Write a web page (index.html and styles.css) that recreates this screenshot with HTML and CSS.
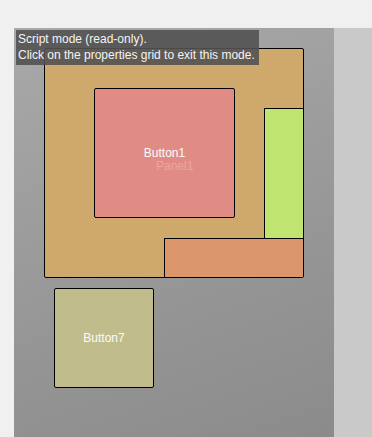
FILE: index.html
```html
<!DOCTYPE html>
<html>
<head>
<meta charset="utf-8">
<link rel="stylesheet" href="styles.css">
</head>
<body>
<div class="window">
  <div class="toolbar"></div>
  <div class="workarea">
    <div class="gutter"></div>
    <div class="canvas">
      <div class="ctl panel1">
        <div class="ctl button1"><span class="label">Button1</span></div>
        <span class="caption">Panel1</span>
        <div class="ctl green"></div>
        <div class="ctl peach"></div>
      </div>
      <div class="ctl button7"><span class="label">Button7</span></div>
      <div class="notice">Script mode (read-only).<br>Click on the properties grid to exit this mode.</div>
    </div>
    <div class="sidebar"></div>
  </div>
</div>
</body>
</html>
```
FILE: styles.css
```css
html, body {
  margin: 0;
  padding: 0;
  width: 372px;
  height: 437px;
  overflow: hidden;
  background: #f0f0f0;
}
.window {
  display: flex;
  flex-direction: column;
  height: 437px;
}
.toolbar {
  height: 28px;
  flex: none;
}
.workarea {
  flex: 1;
  display: flex;
}
.gutter {
  width: 14px;
  flex: none;
}
.canvas {
  width: 320px;
  flex: none;
  position: relative;
  background: linear-gradient(160deg, #a9a9a9 0%, #969696 60%, #8b8b8b 100%);
  overflow: hidden;
}
.sidebar {
  flex: 1;
  background: #c9c9c9;
}
.ctl {
  position: absolute;
  box-sizing: border-box;
  border: 1px solid #000;
  border-radius: 2px;
  display: flex;
  align-items: center;
  justify-content: center;
}
.panel1 {
  left: 30px;
  top: 20px;
  width: 260px;
  height: 230px;
  background: #cfa86b;
  overflow: hidden;
}
.button1 {
  left: 49px;
  top: 39px;
  width: 141px;
  height: 130px;
  background: #e08c85;
}
.green {
  left: 219px;
  top: 59px;
  width: 42px;
  height: 131px;
  background: #c0e470;
  border-radius: 0;
}
.peach {
  left: 119px;
  top: 189px;
  width: 142px;
  height: 41px;
  background: #dc966c;
  border-radius: 0;
}
.button7 {
  left: 40px;
  top: 260px;
  width: 100px;
  height: 100px;
  background: #c1bc8c;
}
.label {
  font-family: "Liberation Sans", Arial, sans-serif;
  font-size: 12px;
  color: #fafafa;
  line-height: 10px;
}
.button1 .label {
  margin-top: -1px;
}
.caption {
  position: absolute;
  left: 111px;
  top: 112px;
  font-family: "Liberation Sans", Arial, sans-serif;
  font-size: 12px;
  line-height: 10px;
  color: #eda5a2;
}
.notice {
  position: absolute;
  left: 2px;
  top: 2px;
  width: 239px;
  padding: 1px 2px 2px 2px;
  background: rgba(82, 82, 82, 0.9);
  color: #f4f4f4;
  font-family: "Liberation Sans", Arial, sans-serif;
  font-size: 12px;
  line-height: 16px;
  white-space: nowrap;
}
```
